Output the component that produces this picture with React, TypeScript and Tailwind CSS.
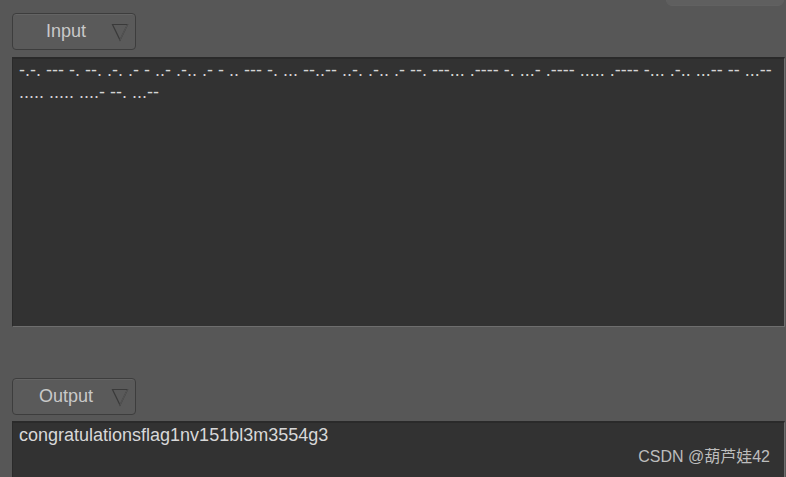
const morse =
  '-.-. --- -. --. .-. .- - ..- .-.. .- - .. --- -. ... --..-- ..-. .-.. .- --. ---... .---- -. ...- .---- ..... .---- -... .-.. ...-- -- ...-- ..... ..... ....- --. ...--'

function Selector({ label }: { label: string }) {
  return (
    <div className="w-[124px] h-[37px] flex items-center bg-[#5a5a5a] border border-[#3d3d3d] rounded-[4px] shadow-[inset_0_1px_0_#646464]">
      <span className="flex-1 text-center pl-[8px] text-[18px] text-[#c9c9c9]">{label}</span>
      <svg width="18" height="20" viewBox="0 0 18 20" className="mr-[6px]">
        <path d="M1.5 2.5 H16.5 L9 18 Z" fill="none" stroke="#3a3a3a" strokeWidth="1.2" />
        <path d="M9 18 L16.5 2.5" fill="none" stroke="#6a6a6a" strokeWidth="0.6" />
      </svg>
    </div>
  )
}

export default function App() {
  return (
    <div
      className="relative w-[786px] h-[477px] overflow-hidden bg-[#575757]"
      style={{ fontFamily: '"Liberation Sans", Arial, "Noto Sans CJK SC", sans-serif' }}
    >
      {/* 오른쪽 위 탭 */}
      <div className="absolute top-[-10px] left-[666px] w-[118px] h-[16px] bg-[#5f5f5f] rounded-b-[6px] border border-[#616161]" />

      <div className="flex flex-col pl-[12px] pr-[1px] pt-[13px]">
        <Selector label="Input" />

        <div className="mt-[7px] h-[270px] bg-[#323232] border-t-2 border-l border-t-[#2a2a2a] border-l-[#2a2a2a] border-b border-r border-b-[#6e6e6e] border-r-[#6e6e6e] px-[6px] pt-[0px]">
          <p className="text-[18px] leading-[22px] text-[#d4d4d4] break-words">{morse}</p>
        </div>

        <div className="mt-[51px]">
          <Selector label="Output" />
        </div>

        <div className="mt-[6px] h-[80px] bg-[#323232] border-t-2 border-l border-t-[#2a2a2a] border-l-[#2a2a2a] border-r border-r-[#6e6e6e] px-[6px] pt-[1px]">
          <p className="text-[18px] leading-[22px] text-[#d8d8d8]">congratulationsflag1nv151bl3m3554g3</p>
        </div>
      </div>

      {/* 워터마크 */}
      <span className="absolute right-[16px] bottom-[8px] text-[16px] text-[#bdbdbd]">CSDN @葫芦娃42</span>
    </div>
  )
}
